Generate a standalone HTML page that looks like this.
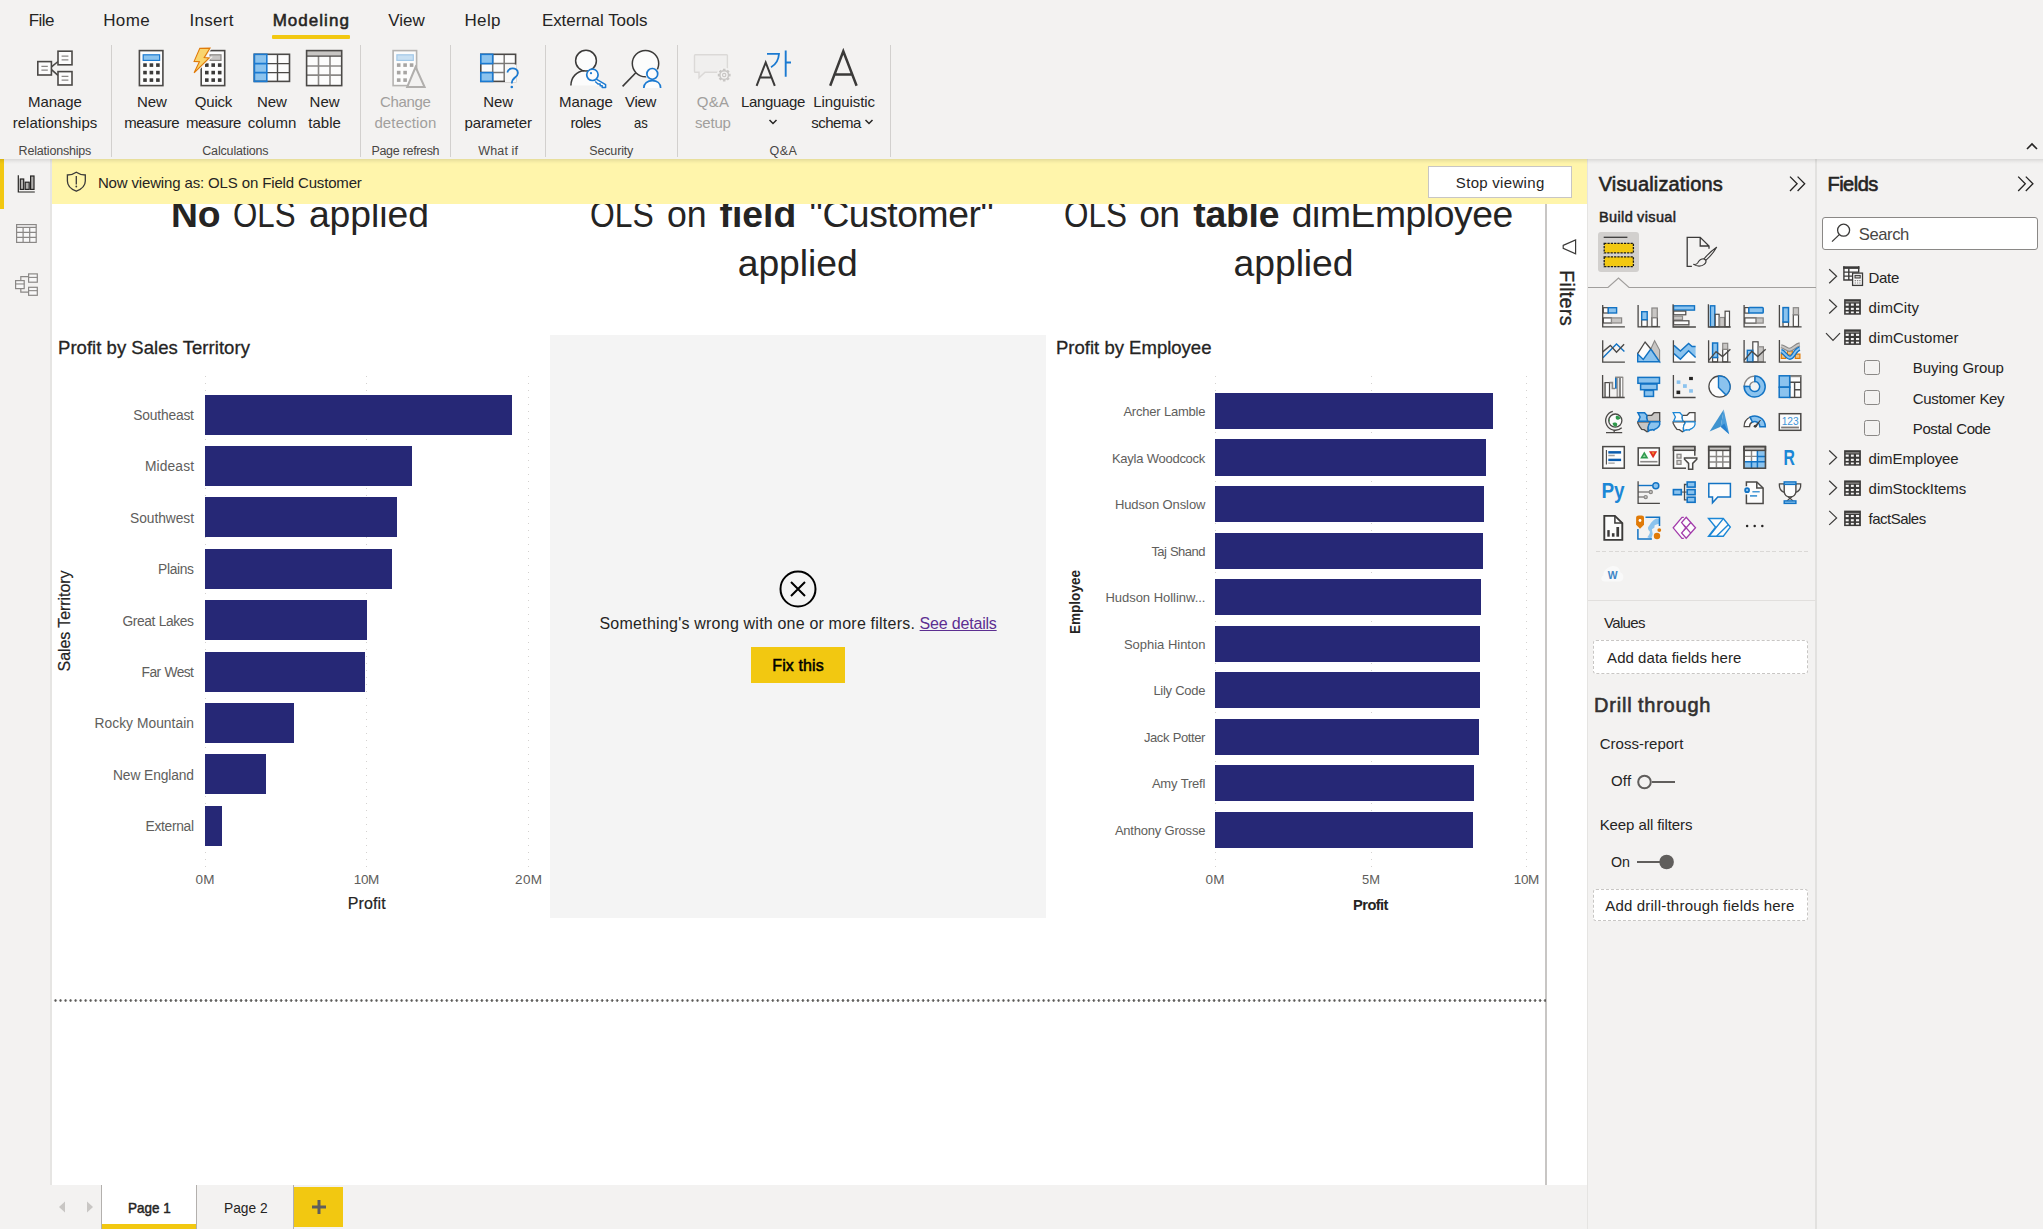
<!DOCTYPE html>
<html><head><meta charset="utf-8"><title>Power BI Desktop</title>
<style>
html,body{margin:0;padding:0;}
body{width:2043px;height:1229px;position:relative;overflow:hidden;background:#f3f2f1;font-family:"Liberation Sans",sans-serif;}
.t{position:absolute;white-space:nowrap;display:block;}
.r{position:absolute;display:block;}
</style></head><body>
<div class="r" style="left:0px;top:0px;width:2043px;height:159px;background:#f3f2f1;"></div>
<div class="r" style="left:52px;top:204px;width:1535px;height:981px;background:#ffffff;"></div>
<div class="r" style="left:0px;top:159px;width:52px;height:1070px;background:#f3f2f1;"></div>
<div class="r" style="left:50px;top:159px;width:2px;height:1026px;background:#e6e5e3;"></div>
<div class="r" style="left:0px;top:159px;width:4px;height:50px;background:#f2c811;"></div>
<div class="r" style="left:52px;top:1185px;width:1535px;height:44px;background:#f3f2f1;"></div>
<div class="r" style="left:1587px;top:159px;width:456px;height:1070px;background:#f3f2f1;"></div>
<div class="r" style="left:1587px;top:159px;width:1px;height:1070px;background:#e5e4e2;"></div>
<div class="r" style="left:1815px;top:159px;width:2px;height:1070px;background:#e2e1df;"></div>
<div class="r" style="left:1545px;top:204px;width:2px;height:981px;background:#c8c6c4;"></div>
<div class="r" style="left:52px;top:159px;width:1535px;height:45px;background:#fff5ab;"></div>
<span class="t" style="left:28.80px;top:12px;font-size:17px;line-height:17px;color:#252423;letter-spacing:-0.590px;">File</span>
<span class="t" style="left:103.20px;top:12px;font-size:17px;line-height:17px;color:#252423;letter-spacing:0.403px;">Home</span>
<span class="t" style="left:189.50px;top:12px;font-size:17px;line-height:17px;color:#252423;letter-spacing:0.280px;">Insert</span>
<span class="t" style="left:272.70px;top:12px;font-size:17px;line-height:17px;color:#252423;-webkit-text-stroke:0.55px #252423;letter-spacing:1.026px;">Modeling</span>
<span class="t" style="left:388.20px;top:12px;font-size:17px;line-height:17px;color:#252423;letter-spacing:0.017px;">View</span>
<span class="t" style="left:464.50px;top:12px;font-size:17px;line-height:17px;color:#252423;letter-spacing:0.322px;">Help</span>
<span class="t" style="left:541.90px;top:12px;font-size:17px;line-height:17px;color:#252423;letter-spacing:-0.067px;word-spacing:0.067px;">External Tools</span>
<div class="r" style="left:272px;top:35px;width:78px;height:4px;background:#f2c811;border-radius:1px;"></div>
<div class="r" style="left:110.5px;top:45px;width:1px;height:112px;background:#d2d0ce;"></div>
<div class="r" style="left:360px;top:45px;width:1px;height:112px;background:#d2d0ce;"></div>
<div class="r" style="left:450px;top:45px;width:1px;height:112px;background:#d2d0ce;"></div>
<div class="r" style="left:545px;top:45px;width:1px;height:112px;background:#d2d0ce;"></div>
<div class="r" style="left:676.5px;top:45px;width:1px;height:112px;background:#d2d0ce;"></div>
<div class="r" style="left:889.5px;top:45px;width:1px;height:112px;background:#d2d0ce;"></div>
<span class="t" style="left:28.10px;top:94px;font-size:15px;line-height:15px;color:#252423;letter-spacing:-0.085px;">Manage</span>
<span class="t" style="left:12.70px;top:115px;font-size:15px;line-height:15px;color:#252423;letter-spacing:0.031px;">relationships</span>
<span class="t" style="left:137.00px;top:94px;font-size:15px;line-height:15px;color:#252423;letter-spacing:-0.037px;">New</span>
<span class="t" style="left:124.30px;top:115px;font-size:15px;line-height:15px;color:#252423;letter-spacing:-0.492px;">measure</span>
<span class="t" style="left:194.80px;top:94px;font-size:15px;line-height:15px;color:#252423;letter-spacing:-0.200px;">Quick</span>
<span class="t" style="left:185.90px;top:115px;font-size:15px;line-height:15px;color:#252423;letter-spacing:-0.492px;">measure</span>
<span class="t" style="left:257.00px;top:94px;font-size:15px;line-height:15px;color:#252423;letter-spacing:-0.037px;">New</span>
<span class="t" style="left:247.70px;top:115px;font-size:15px;line-height:15px;color:#252423;letter-spacing:0.045px;">column</span>
<span class="t" style="left:309.60px;top:94px;font-size:15px;line-height:15px;color:#252423;letter-spacing:-0.037px;">New</span>
<span class="t" style="left:308.25px;top:115px;font-size:15px;line-height:15px;color:#252423;letter-spacing:0.038px;">table</span>
<span class="t" style="left:379.95px;top:94px;font-size:15px;line-height:15px;color:#a19f9d;letter-spacing:-0.335px;">Change</span>
<span class="t" style="left:374.40px;top:115px;font-size:15px;line-height:15px;color:#a19f9d;letter-spacing:0.138px;">detection</span>
<span class="t" style="left:483.20px;top:94px;font-size:15px;line-height:15px;color:#252423;letter-spacing:-0.037px;">New</span>
<span class="t" style="left:464.45px;top:115px;font-size:15px;line-height:15px;color:#252423;letter-spacing:-0.113px;">parameter</span>
<span class="t" style="left:559.00px;top:94px;font-size:15px;line-height:15px;color:#252423;letter-spacing:-0.085px;">Manage</span>
<span class="t" style="left:570.55px;top:115px;font-size:15px;line-height:15px;color:#252423;letter-spacing:-0.462px;">roles</span>
<span class="t" style="left:625.05px;top:94px;font-size:15px;line-height:15px;color:#252423;letter-spacing:-0.317px;">View</span>
<span class="t" style="left:633.80px;top:115px;font-size:15px;line-height:15px;color:#252423;transform:scaleX(0.8720);transform-origin:0 0;">as</span>
<span class="t" style="left:696.75px;top:94px;font-size:15px;line-height:15px;color:#a19f9d;letter-spacing:0.287px;">Q&amp;A</span>
<span class="t" style="left:694.90px;top:115px;font-size:15px;line-height:15px;color:#a19f9d;letter-spacing:-0.169px;">setup</span>
<span class="t" style="left:741.10px;top:94px;font-size:15px;line-height:15px;color:#252423;letter-spacing:-0.364px;">Language</span>
<span class="t" style="left:813.25px;top:94px;font-size:15px;line-height:15px;color:#252423;letter-spacing:-0.094px;">Linguistic</span>
<span class="t" style="left:811.30px;top:115px;font-size:15px;line-height:15px;color:#252423;letter-spacing:-0.515px;">schema</span>
<svg class="r" style="left:768px;top:118px;" width="10" height="8" viewBox="0 0 10 8"><path d="M1.5 2 L5 5.5 L8.5 2" fill="none" stroke="#252423" stroke-width="1.5"/></svg>
<svg class="r" style="left:863.5px;top:118px;" width="10" height="8" viewBox="0 0 10 8"><path d="M1.5 2 L5 5.5 L8.5 2" fill="none" stroke="#252423" stroke-width="1.5"/></svg>
<span class="t" style="left:18.60px;top:145px;font-size:12.5px;line-height:12.5px;color:#484644;letter-spacing:-0.189px;">Relationships</span>
<span class="t" style="left:202.25px;top:145px;font-size:12.5px;line-height:12.5px;color:#484644;letter-spacing:-0.160px;">Calculations</span>
<span class="t" style="left:371.50px;top:145px;font-size:12.5px;line-height:12.5px;color:#484644;letter-spacing:-0.356px;word-spacing:0.356px;">Page refresh</span>
<span class="t" style="left:478.20px;top:145px;font-size:12.5px;line-height:12.5px;color:#484644;letter-spacing:0.172px;word-spacing:-0.172px;">What if</span>
<span class="t" style="left:589.30px;top:145px;font-size:12.5px;line-height:12.5px;color:#484644;letter-spacing:-0.161px;">Security</span>
<span class="t" style="left:769.60px;top:145px;font-size:12.5px;line-height:12.5px;color:#484644;letter-spacing:0.481px;">Q&amp;A</span>
<svg class="r" style="left:2025px;top:141px;" width="14" height="10" viewBox="0 0 14 10"><path d="M2 8 L7 3 L12 8" fill="none" stroke="#252423" stroke-width="1.6"/></svg>
<span class="t" style="left:97.90px;top:175px;font-size:15px;line-height:15px;color:#252423;letter-spacing:-0.178px;word-spacing:0.178px;">Now viewing as: OLS on Field Customer</span>
<div class="r" style="left:1428px;top:166px;width:144px;height:32px;background:#ffffff;border:1px solid #c8c6c4;box-sizing:border-box;"></div>
<span class="t" style="left:1455.80px;top:175px;font-size:15px;line-height:15px;color:#252423;letter-spacing:0.345px;word-spacing:-0.345px;">Stop viewing</span>
<div class="r" style="left:52px;top:204px;width:1493px;height:140px;overflow:hidden;">
<span class="t" style="left:119.10px;top:-8px;font-size:37.3px;line-height:37.3px;color:#252423;font-weight:bold;letter-spacing:-0.295px;">No</span>
<span class="t" style="left:181.00px;top:-8px;font-size:37.3px;line-height:37.3px;color:#252423;transform:scaleX(0.8378);transform-origin:0 0;">OLS</span>
<span class="t" style="left:256.90px;top:-8px;font-size:37.3px;line-height:37.3px;color:#252423;letter-spacing:-0.049px;">applied</span>
<span class="t" style="left:537.90px;top:-8px;font-size:37.3px;line-height:37.3px;color:#252423;transform:scaleX(0.8525);transform-origin:0 0;">OLS</span>
<span class="t" style="left:615.00px;top:-8px;font-size:37.3px;line-height:37.3px;color:#252423;transform:scaleX(0.9565);transform-origin:0 0;">on</span>
<span class="t" style="left:667.60px;top:-8px;font-size:37.3px;line-height:37.3px;color:#252423;font-weight:bold;letter-spacing:-0.013px;">field</span>
<span class="t" style="left:757.60px;top:-8px;font-size:37.3px;line-height:37.3px;color:#252423;letter-spacing:-0.453px;">"Customer"</span>
<span class="t" style="left:685.70px;top:41px;font-size:37.3px;line-height:37.3px;color:#252423;letter-spacing:-0.032px;">applied</span>
<span class="t" style="left:1011.50px;top:-8px;font-size:37.3px;line-height:37.3px;color:#252423;transform:scaleX(0.8432);transform-origin:0 0;">OLS</span>
<span class="t" style="left:1087.30px;top:-8px;font-size:37.3px;line-height:37.3px;color:#252423;letter-spacing:-0.803px;">on</span>
<span class="t" style="left:1141.20px;top:-8px;font-size:37.3px;line-height:37.3px;color:#252423;font-weight:bold;letter-spacing:-0.174px;">table</span>
<span class="t" style="left:1239.80px;top:-8px;font-size:37.3px;line-height:37.3px;color:#252423;letter-spacing:-0.454px;">dimEmployee</span>
<span class="t" style="left:1181.60px;top:41px;font-size:37.3px;line-height:37.3px;color:#252423;letter-spacing:-0.065px;">applied</span>
</div>
<span class="t" style="left:58.00px;top:339px;font-size:18.5px;line-height:18.5px;color:#252423;-webkit-text-stroke:0.3px #252423;letter-spacing:0.047px;word-spacing:-0.047px;">Profit by Sales Territory</span>
<div class="r" style="left:204.5px;top:376px;width:1px;height:491px;background:repeating-linear-gradient(to bottom,#d4d2d0 0,#d4d2d0 1px,transparent 1px,transparent 7px);"></div>
<div class="r" style="left:366.0px;top:376px;width:1px;height:491px;background:repeating-linear-gradient(to bottom,#d4d2d0 0,#d4d2d0 1px,transparent 1px,transparent 7px);"></div>
<div class="r" style="left:528.0px;top:376px;width:1px;height:491px;background:repeating-linear-gradient(to bottom,#d4d2d0 0,#d4d2d0 1px,transparent 1px,transparent 7px);"></div>
<div class="r" style="left:205px;top:394.6px;width:306.8px;height:40.1px;background:#262876;"></div>
<span class="t" style="left:133.30px;top:409px;font-size:13.8px;line-height:13.8px;color:#605e5c;letter-spacing:-0.184px;">Southeast</span>
<div class="r" style="left:205px;top:446.0px;width:207.2px;height:40.1px;background:#262876;"></div>
<span class="t" style="left:145.00px;top:460px;font-size:13.8px;line-height:13.8px;color:#605e5c;letter-spacing:0.117px;">Mideast</span>
<div class="r" style="left:205px;top:497.4px;width:192px;height:40.1px;background:#262876;"></div>
<span class="t" style="left:130.00px;top:512px;font-size:13.8px;line-height:13.8px;color:#605e5c;letter-spacing:-0.056px;">Southwest</span>
<div class="r" style="left:205px;top:548.8px;width:187.1px;height:40.1px;background:#262876;"></div>
<span class="t" style="left:158.00px;top:563px;font-size:13.8px;line-height:13.8px;color:#605e5c;letter-spacing:-0.321px;">Plains</span>
<div class="r" style="left:205px;top:600.2px;width:162px;height:40.1px;background:#262876;"></div>
<span class="t" style="left:122.50px;top:615px;font-size:13.8px;line-height:13.8px;color:#605e5c;letter-spacing:-0.405px;word-spacing:0.405px;">Great Lakes</span>
<div class="r" style="left:205px;top:651.6px;width:160px;height:40.1px;background:#262876;"></div>
<span class="t" style="left:141.50px;top:666px;font-size:13.8px;line-height:13.8px;color:#605e5c;letter-spacing:-0.542px;word-spacing:0.542px;">Far West</span>
<div class="r" style="left:205px;top:703.0px;width:88.5px;height:40.1px;background:#262876;"></div>
<span class="t" style="left:94.50px;top:717px;font-size:13.8px;line-height:13.8px;color:#605e5c;letter-spacing:0.046px;word-spacing:-0.046px;">Rocky Mountain</span>
<div class="r" style="left:205px;top:754.4px;width:61.1px;height:40.1px;background:#262876;"></div>
<span class="t" style="left:113.00px;top:769px;font-size:13.8px;line-height:13.8px;color:#605e5c;letter-spacing:-0.123px;word-spacing:0.123px;">New England</span>
<div class="r" style="left:205px;top:805.8px;width:17.3px;height:40.1px;background:#262876;"></div>
<span class="t" style="left:145.50px;top:820px;font-size:13.8px;line-height:13.8px;color:#605e5c;letter-spacing:-0.307px;">External</span>
<span class="t" style="left:195.50px;top:873px;font-size:13.5px;line-height:13.5px;color:#605e5c;letter-spacing:0.235px;">0M</span>
<span class="t" style="left:353.75px;top:873px;font-size:13.5px;line-height:13.5px;color:#605e5c;letter-spacing:-0.379px;">10M</span>
<span class="t" style="left:515.00px;top:873px;font-size:13.5px;line-height:13.5px;color:#605e5c;letter-spacing:0.371px;">20M</span>
<span class="t" style="left:347.70px;top:896px;font-size:16px;line-height:16px;color:#252423;-webkit-text-stroke:0.2px #252423;letter-spacing:0.128px;">Profit</span>
<div class="r" style="left:65px;top:620.6px;width:0;height:0;"><div style="position:absolute;transform:translate(-50%,-50%) rotate(-90deg);white-space:nowrap;font-size:16px;line-height:16px;color:#252423;-webkit-text-stroke:0.2px #252423;letter-spacing:-0.08px;">Sales Territory</div></div>
<div class="r" style="left:550px;top:334.5px;width:496px;height:583.5px;background:#f4f4f4;"></div>
<svg class="r" style="left:778px;top:569px;" width="40" height="40" viewBox="0 0 40 40"><circle cx="20" cy="20" r="17.5" fill="none" stroke="#000" stroke-width="2"/><path d="M13 13 L27 27 M27 13 L13 27" stroke="#000" stroke-width="2" fill="none"/></svg>
<span class="t" style="left:599.40px;top:616px;font-size:16px;line-height:16px;color:#252423;letter-spacing:0.258px;word-spacing:-0.258px;">Something's wrong with one or more filters.</span>
<span class="t" style="left:919.60px;top:616px;font-size:16px;line-height:16px;color:#5c2e91;letter-spacing:-0.211px;word-spacing:0.211px;text-decoration:underline;">See details</span>
<div class="r" style="left:751px;top:647.3px;width:94px;height:35.3px;background:#f2c811;"></div>
<span class="t" style="left:772.25px;top:658px;font-size:16px;line-height:16px;color:#000;-webkit-text-stroke:0.5px #000;letter-spacing:0.143px;word-spacing:-0.143px;">Fix this</span>
<span class="t" style="left:1056.00px;top:339px;font-size:18.5px;line-height:18.5px;color:#252423;-webkit-text-stroke:0.3px #252423;letter-spacing:0.013px;word-spacing:-0.013px;">Profit by Employee</span>
<div class="r" style="left:1214.5px;top:376px;width:1px;height:491px;background:repeating-linear-gradient(to bottom,#d4d2d0 0,#d4d2d0 1px,transparent 1px,transparent 7px);"></div>
<div class="r" style="left:1370.5px;top:376px;width:1px;height:491px;background:repeating-linear-gradient(to bottom,#d4d2d0 0,#d4d2d0 1px,transparent 1px,transparent 7px);"></div>
<div class="r" style="left:1526.0px;top:376px;width:1px;height:491px;background:repeating-linear-gradient(to bottom,#d4d2d0 0,#d4d2d0 1px,transparent 1px,transparent 7px);"></div>
<div class="r" style="left:1215px;top:392.9px;width:278px;height:36.2px;background:#262876;"></div>
<span class="t" style="left:1123.40px;top:405px;font-size:13px;line-height:13px;color:#605e5c;letter-spacing:-0.233px;word-spacing:0.233px;">Archer Lamble</span>
<div class="r" style="left:1215px;top:439.4px;width:270.9px;height:36.2px;background:#262876;"></div>
<span class="t" style="left:1111.90px;top:452px;font-size:13px;line-height:13px;color:#605e5c;letter-spacing:-0.263px;word-spacing:0.263px;">Kayla Woodcock</span>
<div class="r" style="left:1215px;top:485.9px;width:269.4px;height:36.2px;background:#262876;"></div>
<span class="t" style="left:1114.90px;top:498px;font-size:13px;line-height:13px;color:#605e5c;letter-spacing:-0.116px;word-spacing:0.116px;">Hudson Onslow</span>
<div class="r" style="left:1215px;top:532.5px;width:267.7px;height:36.2px;background:#262876;"></div>
<span class="t" style="left:1151.40px;top:545px;font-size:13px;line-height:13px;color:#605e5c;letter-spacing:-0.550px;word-spacing:0.550px;">Taj Shand</span>
<div class="r" style="left:1215px;top:579.0px;width:265.7px;height:36.2px;background:#262876;"></div>
<span class="t" style="left:1105.40px;top:591px;font-size:13px;line-height:13px;color:#605e5c;letter-spacing:-0.028px;word-spacing:0.028px;">Hudson Hollinw...</span>
<div class="r" style="left:1215px;top:625.5px;width:265.3px;height:36.2px;background:#262876;"></div>
<span class="t" style="left:1123.90px;top:638px;font-size:13px;line-height:13px;color:#605e5c;letter-spacing:-0.013px;word-spacing:0.013px;">Sophia Hinton</span>
<div class="r" style="left:1215px;top:672.0px;width:265px;height:36.2px;background:#262876;"></div>
<span class="t" style="left:1153.40px;top:684px;font-size:13px;line-height:13px;color:#605e5c;letter-spacing:-0.316px;word-spacing:0.316px;">Lily Code</span>
<div class="r" style="left:1215px;top:718.5px;width:264px;height:36.2px;background:#262876;"></div>
<span class="t" style="left:1143.90px;top:731px;font-size:13px;line-height:13px;color:#605e5c;letter-spacing:-0.389px;word-spacing:0.389px;">Jack Potter</span>
<div class="r" style="left:1215px;top:765.1px;width:259.1px;height:36.2px;background:#262876;"></div>
<span class="t" style="left:1151.90px;top:777px;font-size:13px;line-height:13px;color:#605e5c;letter-spacing:-0.204px;word-spacing:0.204px;">Amy Trefl</span>
<div class="r" style="left:1215px;top:811.6px;width:257.7px;height:36.2px;background:#262876;"></div>
<span class="t" style="left:1114.90px;top:824px;font-size:13px;line-height:13px;color:#605e5c;letter-spacing:-0.226px;word-spacing:0.226px;">Anthony Grosse</span>
<span class="t" style="left:1205.50px;top:873px;font-size:13.5px;line-height:13.5px;color:#605e5c;letter-spacing:0.235px;">0M</span>
<span class="t" style="left:1362.00px;top:873px;font-size:13.5px;line-height:13.5px;color:#605e5c;transform:scaleX(0.9592);transform-origin:0 0;">5M</span>
<span class="t" style="left:1513.75px;top:873px;font-size:13.5px;line-height:13.5px;color:#605e5c;letter-spacing:-0.379px;">10M</span>
<span class="t" style="left:1353.10px;top:898px;font-size:14.67px;line-height:14.67px;color:#252423;font-weight:bold;letter-spacing:-0.578px;">Profit</span>
<div class="r" style="left:1074.8px;top:601.8px;width:0;height:0;"><div style="position:absolute;transform:translate(-50%,-50%) rotate(-90deg) scaleX(0.925);white-space:nowrap;font-size:14.67px;line-height:15px;color:#252423;font-weight:bold;">Employee</div></div>
<div class="r" style="left:52.9px;top:999px;width:1493px;height:3px;background:radial-gradient(circle at 2.51px 1.5px,#5a5957 0.95px,rgba(90,89,87,0) 1.55px);background-size:5.02px 3px;"></div>
<div class="r" style="left:101px;top:1185px;width:96px;height:44px;background:#ffffff;"></div>
<div class="r" style="left:101px;top:1224px;width:96px;height:5px;background:#f2c811;"></div>
<div class="r" style="left:101px;top:1185px;width:1px;height:44px;background:#b3b0ad;"></div>
<div class="r" style="left:196px;top:1185px;width:1px;height:44px;background:#b3b0ad;"></div>
<div class="r" style="left:293px;top:1185px;width:1px;height:44px;background:#b3b0ad;"></div>
<span class="t" style="left:128.10px;top:1200px;font-size:15px;line-height:15px;color:#252423;-webkit-text-stroke:0.5px #252423;transform:scaleX(0.8980);transform-origin:0 0;">Page 1</span>
<span class="t" style="left:223.50px;top:1200px;font-size:15px;line-height:15px;color:#252423;transform:scaleX(0.9169);transform-origin:0 0;">Page 2</span>
<div class="r" style="left:294px;top:1187px;width:49px;height:40px;background:#f2c811;"></div>
<svg class="r" style="left:309px;top:1197px;" width="20" height="20" viewBox="0 0 20 20"><path d="M10 3 V17 M3 10 H17" stroke="#605e5c" stroke-width="3" fill="none"/></svg>
<svg class="r" style="left:58px;top:1200px;" width="8" height="14" viewBox="0 0 8 14"><path d="M7 1.5 L1 7 L7 12.5 Z" fill="#c8c6c4"/></svg>
<svg class="r" style="left:86px;top:1200px;" width="8" height="14" viewBox="0 0 8 14"><path d="M1 1.5 L7 7 L1 12.5 Z" fill="#c8c6c4"/></svg>
<div class="r" style="left:1566.6px;top:297.5px;width:0;height:0;"><div style="position:absolute;transform:translate(-50%,-50%) rotate(90deg);white-space:nowrap;font-size:20px;line-height:20px;color:#252423;-webkit-text-stroke:0.35px #252423;letter-spacing:0.2px;">Filters</div></div>
<span class="t" style="left:1598.70px;top:174px;font-size:20px;line-height:20px;color:#252423;-webkit-text-stroke:0.6px #252423;letter-spacing:0.162px;">Visualizations</span>
<span class="t" style="left:1599.00px;top:210px;font-size:14.5px;line-height:14.5px;color:#252423;-webkit-text-stroke:0.5px #252423;letter-spacing:0.363px;word-spacing:-0.363px;">Build visual</span>
<div class="r" style="left:1598px;top:232px;width:41px;height:40px;background:#d2d0ce;border-radius:3px;"></div>
<svg class="r" style="left:1588px;top:276px;" width="228" height="14" viewBox="0 0 228 14"><path d="M0 11.5 H20 L30.5 2 L41 11.5 H228" fill="none" stroke="#a19f9d" stroke-width="1.2"/></svg>
<div class="r" style="left:1595.7px;top:551px;width:212.5px;height:1px;background:repeating-linear-gradient(to right,#dad8d6 0,#dad8d6 4px,transparent 4px,transparent 6.3px);"></div>
<div class="r" style="left:1588px;top:600px;width:228px;height:1px;background:#e1dfdd;"></div>
<span class="t" style="left:1603.90px;top:615px;font-size:15px;line-height:15px;color:#252423;letter-spacing:-0.615px;">Values</span>
<div class="r" style="left:1593px;top:639.5px;width:215px;height:34.5px;background:#fff;border:1px dashed #c8c6c4;border-radius:3px;box-sizing:border-box;"></div>
<span class="t" style="left:1607.10px;top:650px;font-size:15px;line-height:15px;color:#252423;letter-spacing:0.048px;word-spacing:-0.048px;">Add data fields here</span>
<span class="t" style="left:1594.10px;top:695px;font-size:20px;line-height:20px;color:#323130;-webkit-text-stroke:0.6px #323130;letter-spacing:0.773px;word-spacing:-0.773px;">Drill through</span>
<span class="t" style="left:1599.70px;top:736px;font-size:15px;line-height:15px;color:#252423;letter-spacing:0.025px;">Cross-report</span>
<span class="t" style="left:1611.00px;top:773px;font-size:15px;line-height:15px;color:#252423;letter-spacing:0.200px;">Off</span>
<svg class="r" style="left:1634px;top:772px;" width="44" height="20" viewBox="0 0 44 20"><path d="M18 10 H41" stroke="#605e5c" stroke-width="2"/><circle cx="10.5" cy="10" r="6.3" fill="#f3f2f1" stroke="#605e5c" stroke-width="2"/></svg>
<span class="t" style="left:1599.70px;top:817px;font-size:15px;line-height:15px;color:#252423;letter-spacing:-0.108px;word-spacing:0.108px;">Keep all filters</span>
<span class="t" style="left:1611.00px;top:854px;font-size:15px;line-height:15px;color:#252423;transform:scaleX(0.9488);transform-origin:0 0;">On</span>
<svg class="r" style="left:1634px;top:852px;" width="44" height="20" viewBox="0 0 44 20"><path d="M3 10 H28" stroke="#605e5c" stroke-width="2"/><circle cx="32.6" cy="10" r="7.3" fill="#605e5c"/></svg>
<div class="r" style="left:1593px;top:888.5px;width:215px;height:32.5px;background:#fff;border:1px dashed #c8c6c4;border-radius:3px;box-sizing:border-box;"></div>
<span class="t" style="left:1605.20px;top:898px;font-size:15px;line-height:15px;color:#252423;letter-spacing:0.230px;word-spacing:-0.230px;">Add drill-through fields here</span>
<span class="t" style="left:1827.40px;top:174px;font-size:20px;line-height:20px;color:#252423;-webkit-text-stroke:0.6px #252423;letter-spacing:-0.480px;">Fields</span>
<div class="r" style="left:1822px;top:216.5px;width:216px;height:33px;background:#fff;border:1px solid #8a8886;border-radius:3px;box-sizing:border-box;"></div>
<span class="t" style="left:1858.80px;top:227px;font-size:16.6px;line-height:16.6px;color:#484644;letter-spacing:-0.404px;">Search</span>
<span class="t" style="left:1868.60px;top:270px;font-size:15px;line-height:15px;color:#252423;letter-spacing:-0.350px;">Date</span>
<span class="t" style="left:1868.60px;top:300px;font-size:15px;line-height:15px;color:#252423;letter-spacing:0.062px;">dimCity</span>
<span class="t" style="left:1868.60px;top:330px;font-size:15px;line-height:15px;color:#252423;letter-spacing:0.062px;">dimCustomer</span>
<span class="t" style="left:1912.80px;top:360px;font-size:15px;line-height:15px;color:#252423;letter-spacing:-0.062px;word-spacing:0.062px;">Buying Group</span>
<div class="r" style="left:1864.3px;top:359.8px;width:15.4px;height:15.4px;background:transparent;border:1px solid #8a8886;border-radius:2.5px;box-sizing:border-box;"></div>
<span class="t" style="left:1912.80px;top:391px;font-size:15px;line-height:15px;color:#252423;letter-spacing:-0.323px;word-spacing:0.323px;">Customer Key</span>
<div class="r" style="left:1864.3px;top:390.0px;width:15.4px;height:15.4px;background:transparent;border:1px solid #8a8886;border-radius:2.5px;box-sizing:border-box;"></div>
<span class="t" style="left:1912.80px;top:421px;font-size:15px;line-height:15px;color:#252423;letter-spacing:-0.406px;word-spacing:0.406px;">Postal Code</span>
<div class="r" style="left:1864.3px;top:420.2px;width:15.4px;height:15.4px;background:transparent;border:1px solid #8a8886;border-radius:2.5px;box-sizing:border-box;"></div>
<span class="t" style="left:1868.60px;top:451px;font-size:15px;line-height:15px;color:#252423;letter-spacing:-0.080px;">dimEmployee</span>
<span class="t" style="left:1868.60px;top:481px;font-size:15px;line-height:15px;color:#252423;letter-spacing:-0.060px;">dimStockItems</span>
<span class="t" style="left:1868.60px;top:511px;font-size:15px;line-height:15px;color:#252423;letter-spacing:-0.516px;">factSales</span>
<div class="r" style="left:0;top:159px;width:2043px;height:5px;background:linear-gradient(rgba(0,0,0,0.10),rgba(0,0,0,0.03) 60%,rgba(0,0,0,0));"></div>
<svg class="r" style="left:0;top:0;" width="2043" height="1229" viewBox="0 0 2043 1229"><path d="M51.5 66.8 L58 61.5 M51.5 69.6 L58 75.4" stroke="#4b4947" stroke-width="1.6" fill="none"/><rect x="37.8" y="61.6" width="13.6" height="13.4" fill="#fcfcfc" stroke="#4b4947" stroke-width="1.6"/><path d="M41.4 66.39999999999999 H47.8 M41.4 70.2 H47.8" stroke="#8a8886" stroke-width="1.3"/><rect x="58" y="51.2" width="14" height="13.6" fill="#fcfcfc" stroke="#4b4947" stroke-width="1.6"/><path d="M61.6 56.1 H68.4 M61.6 59.9 H68.4" stroke="#8a8886" stroke-width="1.3"/><rect x="58" y="71.6" width="14" height="13.4" fill="#fcfcfc" stroke="#4b4947" stroke-width="1.6"/><path d="M61.6 76.39999999999999 H68.4 M61.6 80.2 H68.4" stroke="#8a8886" stroke-width="1.3"/><rect x="139.4" y="50.6" width="23.5" height="35" fill="#fcfcfc" stroke="#4b4947" stroke-width="1.6"/><rect x="143.20000000000002" y="54.800000000000004" width="16.4" height="5.6" fill="#8bc3ee" stroke="#1b7ad1" stroke-width="1.2"/><rect x="143.20000000000002" y="63.3" width="3.6" height="3.6" fill="#3b3a39"/><rect x="149.6" y="63.3" width="3.6" height="3.6" fill="#3b3a39"/><rect x="156.1" y="63.3" width="3.6" height="3.6" fill="#3b3a39"/><rect x="143.20000000000002" y="70.8" width="3.6" height="3.6" fill="#3b3a39"/><rect x="149.6" y="70.8" width="3.6" height="3.6" fill="#3b3a39"/><rect x="156.1" y="70.8" width="3.6" height="3.6" fill="#3b3a39"/><rect x="143.20000000000002" y="78.3" width="3.6" height="3.6" fill="#3b3a39"/><rect x="149.6" y="78.3" width="3.6" height="3.6" fill="#3b3a39"/><rect x="156.1" y="78.3" width="3.6" height="3.6" fill="#3b3a39"/><rect x="201.2" y="50.6" width="23.5" height="35" fill="#fcfcfc" stroke="#4b4947" stroke-width="1.6"/><rect x="210.0" y="54.800000000000004" width="11.0" height="5.6" fill="#c8c6c4" stroke="#8a8886" stroke-width="1.2"/><rect x="205.0" y="63.3" width="3.6" height="3.6" fill="#3b3a39"/><rect x="211.39999999999998" y="63.3" width="3.6" height="3.6" fill="#3b3a39"/><rect x="217.89999999999998" y="63.3" width="3.6" height="3.6" fill="#3b3a39"/><rect x="205.0" y="70.8" width="3.6" height="3.6" fill="#3b3a39"/><rect x="211.39999999999998" y="70.8" width="3.6" height="3.6" fill="#3b3a39"/><rect x="217.89999999999998" y="70.8" width="3.6" height="3.6" fill="#3b3a39"/><rect x="205.0" y="78.3" width="3.6" height="3.6" fill="#3b3a39"/><rect x="211.39999999999998" y="78.3" width="3.6" height="3.6" fill="#3b3a39"/><rect x="217.89999999999998" y="78.3" width="3.6" height="3.6" fill="#3b3a39"/><path d="M199.8 48.4 L210 48.1 L204.2 57.6 L209.2 58 L194.1 72.8 L199.4 61.7 L194.1 61.4 Z" fill="#f3f2f1" stroke="#f3f2f1" stroke-width="3.2"/><path d="M199.8 48.4 L210 48.1 L204.2 57.6 L209.2 58 L194.1 72.8 L199.4 61.7 L194.1 61.4 Z" fill="#f9d56e" stroke="#e07a08" stroke-width="1.1" stroke-linejoin="miter"/><rect x="393.1" y="50.6" width="23.5" height="35" fill="#fcfcfc" stroke="#b5b3b1" stroke-width="1.6"/><rect x="396.90000000000003" y="54.800000000000004" width="16.4" height="5.6" fill="#c9e0f2" stroke="#a3c9e8" stroke-width="1.2"/><rect x="396.90000000000003" y="63.3" width="3.6" height="3.6" fill="#a7a5a3"/><rect x="403.3" y="63.3" width="3.6" height="3.6" fill="#a7a5a3"/><rect x="409.8" y="63.3" width="3.6" height="3.6" fill="#a7a5a3"/><rect x="396.90000000000003" y="70.8" width="3.6" height="3.6" fill="#a7a5a3"/><rect x="403.3" y="70.8" width="3.6" height="3.6" fill="#a7a5a3"/><rect x="396.90000000000003" y="78.3" width="3.6" height="3.6" fill="#a7a5a3"/><rect x="403.3" y="78.3" width="3.6" height="3.6" fill="#a7a5a3"/><path d="M415.6 67 L407.2 87 H424.6 Z" fill="#f3f2f1" stroke="#b1afad" stroke-width="2" stroke-linejoin="miter"/><rect x="254.3" y="54.3" width="35.2" height="27.1" fill="#fcfcfc"/><rect x="254.3" y="54.3" width="12.5" height="27.1" fill="#8bc3ee"/><path d="M266.8 63.6 H289.5 M266.8 72.6 H289.5 M277.5 54.3 V81.4" stroke="#4b4947" stroke-width="1.4"/><rect x="254.3" y="54.3" width="35.2" height="27.1" fill="none" stroke="#4b4947" stroke-width="1.6"/><path d="M254.3 54.3 V81.4 M266.8 54.3 V81.4 M254.3 63.6 H266.8 M254.3 72.6 H266.8 M253.5 54.3 H267.6 M253.5 81.4 H267.6" stroke="#1b7ad1" stroke-width="1.6"/><rect x="306.6" y="50.6" width="35.1" height="35" fill="#fcfcfc"/><rect x="306.6" y="50.6" width="35.1" height="5.5" fill="#c8c6c4"/><path d="M306.6 66 H341.7 M306.6 75.1 H341.7 M318.5 56.1 V85.6 M330 56.1 V85.6" stroke="#8a8886" stroke-width="1.6"/><path d="M306.6 56.1 H341.7" stroke="#4b4947" stroke-width="1.4"/><rect x="306.6" y="50.6" width="35.1" height="35" fill="none" stroke="#4b4947" stroke-width="1.6"/><rect x="480.8" y="54.3" width="34.8" height="27.1" fill="#fcfcfc"/><path d="M480.8 63.6 H515.6 M480.8 72.6 H515.6 M504.2 54.3 V81.4 M492.7 54.3 V81.4" stroke="#7a7876" stroke-width="1.5"/><rect x="480.8" y="54.3" width="34.8" height="27.1" fill="none" stroke="#4b4947" stroke-width="1.6"/><rect x="480.8" y="54.3" width="11.9" height="9.3" fill="#8bc3ee" stroke="#1b7ad1" stroke-width="1.6"/><rect x="480.8" y="72.6" width="11.9" height="8.8" fill="#8bc3ee" stroke="#1b7ad1" stroke-width="1.6"/><rect x="505" y="64.6" width="11.6" height="17.6" fill="#f7f7f6"/><path d="M507.3 72.5 C508 68.5 513 67.3 516 69.3 C519 71.5 518.3 75 515.5 77 C513.2 78.8 511.8 80 511.8 83.4" fill="none" stroke="#1b7ad1" stroke-width="1.7"/><circle cx="511.8" cy="87" r="1.3" fill="#1b7ad1"/><path d="M570.9 85.6 C570.9 77 577 71 585 70.6 L600 85.6 Z" fill="#fcfcfc"/><circle cx="586" cy="60.7" r="10.4" fill="#fcfcfc" stroke="#3b3a39" stroke-width="1.5"/><path d="M570.9 85.6 C570.9 77 577 71.2 584.3 70.8" fill="none" stroke="#3b3a39" stroke-width="1.5"/><path d="M596.3 79.2 L605.6 84.6 V87.6 H602.2 V85.8 H600.2 V84 H598 L595.2 81.5" fill="#fcfcfc" stroke="#1b7ad1" stroke-width="1.5" stroke-linejoin="round"/><circle cx="592.4" cy="74.8" r="5.7" fill="#fcfcfc" stroke="#1b7ad1" stroke-width="1.7"/><circle cx="591" cy="73.2" r="1.1" fill="#1b7ad1"/><circle cx="645.5" cy="63.6" r="13.2" fill="#fcfcfc" stroke="#3b3a39" stroke-width="1.5"/><path d="M635.8 72.8 L622.6 86.4" stroke="#3b3a39" stroke-width="1.6"/><path d="M643.6 88 C643.6 83.6 647.4 80.6 652.3 80.6 C657.2 80.6 660.8 83.6 660.8 88 Z" fill="#fcfcfc" stroke="#f3f2f1" stroke-width="3"/><circle cx="652.3" cy="73.9" r="6.9" fill="#f3f2f1"/><path d="M643.8 88 C643.8 83.6 647.4 80.7 652.3 80.7 C657.2 80.7 660.6 83.6 660.6 88" fill="#fcfcfc" stroke="#1b7ad1" stroke-width="1.7"/><circle cx="652.3" cy="73.9" r="5.4" fill="#fcfcfc" stroke="#1b7ad1" stroke-width="1.7"/><path d="M695.3 54.8 H726.6 Q727.4 54.8 727.4 55.6 V71.4 Q727.4 72.2 726.6 72.2 H705 L699 77.8 V72.2 H695.3 Q694.5 72.2 694.5 71.4 V55.6 Q694.5 54.8 695.3 54.8 Z" fill="#f0efee" stroke="#dbd9d7" stroke-width="1.4"/><circle cx="724.2" cy="75.1" r="7.6" fill="#f3f2f1"/><path d="M728.60 75.10 L730.60 75.10" stroke="#c8c6c4" stroke-width="2.6"/><path d="M727.31 78.21 L728.73 79.63" stroke="#c8c6c4" stroke-width="2.6"/><path d="M724.20 79.50 L724.20 81.50" stroke="#c8c6c4" stroke-width="2.6"/><path d="M721.09 78.21 L719.67 79.63" stroke="#c8c6c4" stroke-width="2.6"/><path d="M719.80 75.10 L717.80 75.10" stroke="#c8c6c4" stroke-width="2.6"/><path d="M721.09 71.99 L719.67 70.57" stroke="#c8c6c4" stroke-width="2.6"/><path d="M724.20 70.70 L724.20 68.70" stroke="#c8c6c4" stroke-width="2.6"/><path d="M727.31 71.99 L728.73 70.57" stroke="#c8c6c4" stroke-width="2.6"/><circle cx="724.2" cy="75.1" r="4.3" fill="#f3f2f1" stroke="#c8c6c4" stroke-width="1.4"/><circle cx="724.2" cy="75.1" r="1.7" fill="none" stroke="#c8c6c4" stroke-width="1.1"/><path d="M756.6 85.8 L765.7 62.4 L774.8 85.8 M760 77.4 H771.6" fill="none" stroke="#3b3a39" stroke-width="2"/><path d="M767 53.8 H779 C778.6 60 776 64.6 771 67.2" fill="none" stroke="#1b7ad1" stroke-width="1.8"/><path d="M785.7 50.4 V76.8 M785.7 62.5 H791" fill="none" stroke="#1b7ad1" stroke-width="1.9"/><path d="M830.2 85.8 L843.3 51.2 L856.6 85.8 M834.6 74.5 H852.2" fill="none" stroke="#3b3a39" stroke-width="2.5"/><path d="M18.3 175.3 V192 H34.8" fill="none" stroke="#252423" stroke-width="1.2"/><rect x="20.3" y="179" width="3.3999999999999986" height="10.400000000000006" fill="#b1afad" stroke="#252423" stroke-width="1.2"/><rect x="25.2" y="182.2" width="4.0" height="7.200000000000017" fill="#b1afad" stroke="#252423" stroke-width="1.2"/><rect x="30.6" y="176" width="3.3999999999999986" height="13.400000000000006" fill="#b1afad" stroke="#252423" stroke-width="1.2"/><rect x="16.6" y="224.6" width="19.6" height="17.8" fill="#f8f8f8" stroke="#8a8886" stroke-width="1.2"/><path d="M16.6 227.4 H36.2 M16.6 232.4 H36.2 M16.6 237.4 H36.2 M23.1 227.4 V242.4 M29.7 227.4 V242.4" stroke="#8a8886" stroke-width="1.2" fill="none"/><path d="M20.8 280.6 V276.6 H28.6 M20.8 288.6 V292.2 H28.6" fill="none" stroke="#8a8886" stroke-width="1.2"/><rect x="15.6" y="280.6" width="8.6" height="8" fill="#f8f8f8" stroke="#8a8886" stroke-width="1.2"/><path d="M15.6 283.96000000000004 H24.2" stroke="#8a8886" stroke-width="1.1"/><rect x="28.6" y="273.9" width="8.7" height="8.3" fill="#f8f8f8" stroke="#8a8886" stroke-width="1.2"/><path d="M28.6 277.38599999999997 H37.3" stroke="#8a8886" stroke-width="1.1"/><rect x="28.6" y="287.3" width="8.7" height="8" fill="#f8f8f8" stroke="#8a8886" stroke-width="1.2"/><path d="M28.6 290.66 H37.3" stroke="#8a8886" stroke-width="1.1"/><path d="M76.3 172.2 C79.5 174.4 82.3 175 85.3 175 V181 C85.3 185.8 81.5 189.2 76.3 191.2 C71.1 189.2 67.4 185.8 67.4 181 V175 C70.4 175 73.2 174.4 76.3 172.2 Z" fill="none" stroke="#3b3a39" stroke-width="1.3"/><path d="M76.3 176 V184.4" stroke="#3b3a39" stroke-width="1.3"/><circle cx="76.3" cy="186.5" r="0.9" fill="#3b3a39"/><path d="M1563.2 245.4 L1575.6 239.9 V253.9 L1563.2 248.4 Z" fill="none" stroke="#3b3a39" stroke-width="1.2" stroke-linejoin="miter"/><path d="M1790 176.6 L1797.1 183.79999999999998 L1790 191.0 M1797.6 176.6 L1804.7 183.79999999999998 L1797.6 191.0" fill="none" stroke="#252423" stroke-width="1.3"/><path d="M2018.2 176.6 L2025.3 183.79999999999998 L2018.2 191.0 M2025.8 176.6 L2032.9 183.79999999999998 L2025.8 191.0" fill="none" stroke="#252423" stroke-width="1.3"/><path d="M1603.7 237.3 H1627.4" stroke="#3b3a39" stroke-width="1.3"/><rect x="1604.2" y="243.3" width="29.2" height="9.599999999999994" fill="#f2c811" stroke="#1b1a19" stroke-width="1.3" stroke-dasharray="2.2 1.1"/><rect x="1604.2" y="256.8" width="29.2" height="9.800000000000011" fill="#f2c811" stroke="#1b1a19" stroke-width="1.3" stroke-dasharray="2.2 1.1"/><path d="M1691.9 266.4 H1687.2 V237.3 H1700.2 L1709 246 V248.8 M1700.2 237.3 V246 H1709" fill="none" stroke="#3b3a39" stroke-width="1.3"/><path d="M1716.6 247.3 C1714 252 1710 256.6 1705.8 260.4 L1704 258.8 C1707.6 254.6 1712 250.4 1716.6 247.3 Z" fill="#f3f2f1" stroke="#3b3a39" stroke-width="1.1" stroke-linejoin="round"/><path d="M1704 258.8 C1700.4 258.6 1698.6 261.2 1697.6 263 C1696.6 264.4 1695.2 264.8 1693.6 264.4 C1697 266.8 1701.6 266.6 1704.2 264.4 C1705.8 263 1706.4 261.6 1705.8 260.4 Z" fill="#f3f2f1" stroke="#3b3a39" stroke-width="1.1" stroke-linejoin="round"/><circle cx="1843.6" cy="230.2" r="6" fill="none" stroke="#3b3a39" stroke-width="1.3"/><path d="M1839.3 234.6 L1832 241.6" stroke="#3b3a39" stroke-width="1.3"/><path d="M1604.5 581.6 C1601 581.6 1600 577.4 1603.4 575.6 C1603 570.4 1608 567 1612.4 566 C1616.6 565.4 1620 568.4 1620.4 572.4 C1624.4 573.6 1624.6 580.6 1620 581.6 Z" fill="#f9f9f9"/><text x="1612.7" y="579.3" text-anchor="middle" font-family="Liberation Sans, sans-serif" font-weight="bold" font-size="11" fill="#3f86c6" textLength="9.8" lengthAdjust="spacingAndGlyphs">W</text><path d="M1829.2 269.3 L1836.6000000000001 276.3 L1829.2 283.3" fill="none" stroke="#3b3a39" stroke-width="1.2"/><rect x="1843.2" y="266.3" width="16.2" height="14.4" fill="#fafafa"/><rect x="1843.2" y="266.3" width="16.2" height="2.6" fill="#3b3a39"/><path d="M1843.9 266.3 V280.7 M1848.8 268.3 V280.7 M1858.7 266.3 V272.8 M1843.2 272.1 H1859.4 M1843.2 276.1 H1852.2 M1843.2 280.0 H1852.2" stroke="#3b3a39" stroke-width="1.4" fill="none"/><rect x="1852.6" y="273.1" width="9.9" height="12.3" fill="#fafafa" stroke="#3b3a39" stroke-width="1.3"/><rect x="1855" y="275.4" width="5.2" height="2.6" fill="#c8c6c4" stroke="#3b3a39" stroke-width="1"/><path d="M1854.6 280.6 H1860.6 M1854.6 283 H1860.6" stroke="#8a8886" stroke-width="1.2" stroke-dasharray="1.4 0.9"/><path d="M1829.2 299.5 L1836.6000000000001 306.5 L1829.2 313.5" fill="none" stroke="#3b3a39" stroke-width="1.2"/><rect x="1844.1" y="299.2" width="16.8" height="15.5" fill="#3b3a39"/><rect x="1845.6" y="301.5" width="13.8" height="0.8" fill="#b8b6b4"/><rect x="1845.7" y="303.6" width="3.0" height="2.1" fill="#f6f5f4"/><rect x="1845.7" y="307.8" width="3.0" height="2.1" fill="#f6f5f4"/><rect x="1845.7" y="311.5" width="3.0" height="1.7" fill="#f6f5f4"/><rect x="1850.9" y="303.6" width="2.9" height="2.1" fill="#f6f5f4"/><rect x="1850.9" y="307.8" width="2.9" height="2.1" fill="#f6f5f4"/><rect x="1850.9" y="311.5" width="2.9" height="1.7" fill="#f6f5f4"/><rect x="1856.0" y="303.6" width="3.1" height="2.1" fill="#f6f5f4"/><rect x="1856.0" y="307.8" width="3.1" height="2.1" fill="#f6f5f4"/><rect x="1856.0" y="311.5" width="3.1" height="1.7" fill="#f6f5f4"/><path d="M1826 333.09999999999997 L1833 340.49999999999994 L1840 333.09999999999997" fill="none" stroke="#3b3a39" stroke-width="1.2"/><rect x="1844.1" y="329.4" width="16.8" height="15.5" fill="#3b3a39"/><rect x="1845.6" y="331.7" width="13.8" height="0.8" fill="#b8b6b4"/><rect x="1845.7" y="333.8" width="3.0" height="2.1" fill="#f6f5f4"/><rect x="1845.7" y="338.0" width="3.0" height="2.1" fill="#f6f5f4"/><rect x="1845.7" y="341.7" width="3.0" height="1.7" fill="#f6f5f4"/><rect x="1850.9" y="333.8" width="2.9" height="2.1" fill="#f6f5f4"/><rect x="1850.9" y="338.0" width="2.9" height="2.1" fill="#f6f5f4"/><rect x="1850.9" y="341.7" width="2.9" height="1.7" fill="#f6f5f4"/><rect x="1856.0" y="333.8" width="3.1" height="2.1" fill="#f6f5f4"/><rect x="1856.0" y="338.0" width="3.1" height="2.1" fill="#f6f5f4"/><rect x="1856.0" y="341.7" width="3.1" height="1.7" fill="#f6f5f4"/><path d="M1829.2 450.5 L1836.6000000000001 457.5 L1829.2 464.5" fill="none" stroke="#3b3a39" stroke-width="1.2"/><rect x="1844.1" y="450.2" width="16.8" height="15.5" fill="#3b3a39"/><rect x="1845.6" y="452.5" width="13.8" height="0.8" fill="#b8b6b4"/><rect x="1845.7" y="454.6" width="3.0" height="2.1" fill="#f6f5f4"/><rect x="1845.7" y="458.8" width="3.0" height="2.1" fill="#f6f5f4"/><rect x="1845.7" y="462.5" width="3.0" height="1.7" fill="#f6f5f4"/><rect x="1850.9" y="454.6" width="2.9" height="2.1" fill="#f6f5f4"/><rect x="1850.9" y="458.8" width="2.9" height="2.1" fill="#f6f5f4"/><rect x="1850.9" y="462.5" width="2.9" height="1.7" fill="#f6f5f4"/><rect x="1856.0" y="454.6" width="3.1" height="2.1" fill="#f6f5f4"/><rect x="1856.0" y="458.8" width="3.1" height="2.1" fill="#f6f5f4"/><rect x="1856.0" y="462.5" width="3.1" height="1.7" fill="#f6f5f4"/><path d="M1829.2 480.70000000000005 L1836.6000000000001 487.70000000000005 L1829.2 494.70000000000005" fill="none" stroke="#3b3a39" stroke-width="1.2"/><rect x="1844.1" y="480.40000000000003" width="16.8" height="15.5" fill="#3b3a39"/><rect x="1845.6" y="482.70000000000005" width="13.8" height="0.8" fill="#b8b6b4"/><rect x="1845.7" y="484.8" width="3.0" height="2.1" fill="#f6f5f4"/><rect x="1845.7" y="489.0" width="3.0" height="2.1" fill="#f6f5f4"/><rect x="1845.7" y="492.7" width="3.0" height="1.7" fill="#f6f5f4"/><rect x="1850.9" y="484.8" width="2.9" height="2.1" fill="#f6f5f4"/><rect x="1850.9" y="489.0" width="2.9" height="2.1" fill="#f6f5f4"/><rect x="1850.9" y="492.7" width="2.9" height="1.7" fill="#f6f5f4"/><rect x="1856.0" y="484.8" width="3.1" height="2.1" fill="#f6f5f4"/><rect x="1856.0" y="489.0" width="3.1" height="2.1" fill="#f6f5f4"/><rect x="1856.0" y="492.7" width="3.1" height="1.7" fill="#f6f5f4"/><path d="M1829.2 510.9 L1836.6000000000001 517.9 L1829.2 524.9" fill="none" stroke="#3b3a39" stroke-width="1.2"/><rect x="1844.1" y="510.59999999999997" width="16.8" height="15.5" fill="#3b3a39"/><rect x="1845.6" y="512.9" width="13.8" height="0.8" fill="#b8b6b4"/><rect x="1845.7" y="515.0" width="3.0" height="2.1" fill="#f6f5f4"/><rect x="1845.7" y="519.2" width="3.0" height="2.1" fill="#f6f5f4"/><rect x="1845.7" y="522.9" width="3.0" height="1.7" fill="#f6f5f4"/><rect x="1850.9" y="515.0" width="2.9" height="2.1" fill="#f6f5f4"/><rect x="1850.9" y="519.2" width="2.9" height="2.1" fill="#f6f5f4"/><rect x="1850.9" y="522.9" width="2.9" height="1.7" fill="#f6f5f4"/><rect x="1856.0" y="515.0" width="3.1" height="2.1" fill="#f6f5f4"/><rect x="1856.0" y="519.2" width="3.1" height="2.1" fill="#f6f5f4"/><rect x="1856.0" y="522.9" width="3.1" height="1.7" fill="#f6f5f4"/><g transform="translate(1602.0,304.5)"><rect x="1.3" y="3.2" width="5.0" height="5.3" fill="#fcfcfc" stroke="#4b4947" stroke-width="1.2" /><rect x="6.3" y="3.2" width="8.3" height="5.3" fill="#8bc3ee" stroke="#1273c4" stroke-width="1.4" /><rect x="1.3" y="13.4" width="8.2" height="5.1" fill="#fcfcfc" stroke="#4b4947" stroke-width="1.2" /><rect x="9.5" y="13.4" width="10.1" height="5.1" fill="#c8c6c4" stroke="#8a8886" stroke-width="1.2" /><path d="M0.7 0.4 V22.3 H22.9" fill="none" stroke="#4b4947" stroke-width="1.3"/></g><g transform="translate(1637.3,304.5)"><rect x="4.4" y="15.2" width="5.5" height="6.8" fill="#fcfcfc" stroke="#4b4947" stroke-width="1.2" /><rect x="4.4" y="7.2" width="5.5" height="8.0" fill="#8bc3ee" stroke="#1273c4" stroke-width="1.4" /><rect x="14.6" y="13.1" width="5.4" height="8.9" fill="#fcfcfc" stroke="#4b4947" stroke-width="1.2" /><rect x="14.6" y="3.5" width="5.4" height="9.6" fill="#c8c6c4" stroke="#8a8886" stroke-width="1.2" /><path d="M0.8 0.4 V22.3 H22.9" fill="none" stroke="#4b4947" stroke-width="1.3"/></g><g transform="translate(1672.6,304.5)"><rect x="1" y="1.3" width="20.9" height="4.3" fill="#8bc3ee" stroke="#1273c4" stroke-width="1.4" /><rect x="1" y="6.6" width="12.2" height="3.7" fill="#fcfcfc" stroke="#4b4947" stroke-width="1.2" /><rect x="1" y="11.6" width="8.9" height="3.8" fill="#c8c6c4" stroke="#8a8886" stroke-width="1.2" /><rect x="1" y="16.3" width="15.3" height="3.9" fill="#fcfcfc" stroke="#4b4947" stroke-width="1.2" /><rect x="1" y="20.6" width="15.3" height="1.7" fill="#c8c6c4" stroke="#8a8886" stroke-width="0.8" /><path d="M0.5 -0.2 V22.5 H23.3" fill="none" stroke="#4b4947" stroke-width="1.3"/></g><g transform="translate(1707.9,304.5)"><rect x="2.5" y="1.3" width="4.4" height="20.9" fill="#8bc3ee" stroke="#1273c4" stroke-width="1.4" /><rect x="7.3" y="9.8" width="3.9" height="12.4" fill="#fcfcfc" stroke="#4b4947" stroke-width="1.2" /><rect x="11.8" y="13" width="4.8" height="9.2" fill="#c8c6c4" stroke="#8a8886" stroke-width="1.2" /><rect x="17.2" y="6.7" width="4.4" height="15.5" fill="#fcfcfc" stroke="#4b4947" stroke-width="1.2" /><path d="M0.5 -0.3 V22.5 H22.8" fill="none" stroke="#4b4947" stroke-width="1.3"/></g><g transform="translate(1743.2,304.5)"><rect x="1.6" y="3.1" width="4.0" height="5.5" fill="#fcfcfc" stroke="#4b4947" stroke-width="1.2" /><rect x="5.6" y="3.1" width="14.4" height="5.5" fill="#8bc3ee" stroke="#1273c4" stroke-width="1.5" rx="0.8"/><rect x="1.6" y="13.4" width="11.4" height="5.2" fill="#fcfcfc" stroke="#4b4947" stroke-width="1.2" /><rect x="13" y="13.4" width="7" height="5.2" fill="#c8c6c4" stroke="#8a8886" stroke-width="1.2" /><path d="M0.9 0.4 V22.3 H22.7" fill="none" stroke="#4b4947" stroke-width="1.3"/></g><g transform="translate(1778.5,304.5)"><rect x="4.5" y="17.5" width="5.5" height="4.5" fill="#fcfcfc" stroke="#4b4947" stroke-width="1.2" /><rect x="4.5" y="3.1" width="5.5" height="14.4" fill="#8bc3ee" stroke="#1273c4" stroke-width="1.5" /><rect x="14.8" y="10.2" width="5.2" height="11.8" fill="#fcfcfc" stroke="#4b4947" stroke-width="1.2" /><rect x="14.8" y="3.2" width="5.2" height="7.0" fill="#c8c6c4" stroke="#8a8886" stroke-width="1.2" /><path d="M0.9 0.4 V22.3 H23.1" fill="none" stroke="#4b4947" stroke-width="1.3"/></g><g transform="translate(1602.0,339.8)"><path d="M0.9 17.9 L14.5 4.2 L22.4 11.8" fill="none" stroke="#1273c4" stroke-width="1.4" /><path d="M0.7 12.1 L8.4 5.6 L14.5 12.4 L22.1 4.5" fill="none" stroke="#4b4947" stroke-width="1.4" /><path d="M0.7 0.4 V22.3 H22.9" fill="none" stroke="#4b4947" stroke-width="1.3"/></g><g transform="translate(1637.3,339.8)"><path d="M13.5 9.2 L17.3 0.9 L22.3 10.3 V22 Z" fill="#c8c6c4" stroke="#8a8886" stroke-width="1.1" /><path d="M0.4 13.8 L7.8 2.2 L13.5 9.2 L6 19.7 Z" fill="#fcfcfc" stroke="none" stroke-width="0" /><path d="M0.4 14.1 L6 19.7 L13.5 9.2 L22.3 22 H0.4 Z" fill="#8bc3ee" stroke="#1273c4" stroke-width="1.4" /><path d="M0.4 13.8 L7.8 2.2 L13.5 9.2" fill="none" stroke="#4b4947" stroke-width="1.3" /></g><g transform="translate(1672.6,339.8)"><path d="M1.4 13.8 L7.8 19.4 L16 10.9 L23 17.7 V22.3 H1.4 Z" fill="#fcfcfc" stroke="none" stroke-width="0" /><path d="M1.4 5.6 L7.8 11.2 L16 3.6 L19.5 6.8 L23 6.8 V17.7 L16 10.9 L7.8 19.4 L1.4 13.8 Z" fill="#8bc3ee" stroke="none" stroke-width="0" /><path d="M1.4 5.6 L7.8 11.2 L16 3.6 L19.5 6.8 L23 6.8 M1.4 13.8 L7.8 19.4 L16 10.9 L23 17.7" fill="none" stroke="#1273c4" stroke-width="1.5" /><path d="M0.8 0.4 V22.3 H22.9" fill="none" stroke="#4b4947" stroke-width="1.3"/></g><g transform="translate(1707.9,339.8)"><rect x="4.7" y="17.7" width="5.0" height="4.3" fill="#fcfcfc" stroke="#4b4947" stroke-width="1.2" /><rect x="4.7" y="3.2" width="5.0" height="14.5" fill="#8bc3ee" stroke="#1273c4" stroke-width="1.5" /><rect x="14.8" y="9.5" width="5.0" height="12.5" fill="#fcfcfc" stroke="#4b4947" stroke-width="1.2" /><rect x="14.8" y="3.5" width="5.0" height="6.0" fill="#c8c6c4" stroke="#8a8886" stroke-width="1.2" /><path d="M0.8 20.6 L8.2 11.8 L14.6 16.8 L22.5 9.5" fill="none" stroke="#4b4947" stroke-width="1.4" /><path d="M0.7 0.4 V22.3 H22.9" fill="none" stroke="#4b4947" stroke-width="1.3"/></g><g transform="translate(1743.2,339.8)"><rect x="9.6" y="2" width="5.3" height="20" fill="#fcfcfc" stroke="#4b4947" stroke-width="1.2" /><rect x="4.1" y="10.5" width="5.5" height="11.5" fill="#8bc3ee" stroke="#1273c4" stroke-width="1.4" /><rect x="15" y="7" width="5.2" height="15" fill="#c8c6c4" stroke="#8a8886" stroke-width="1.2" /><path d="M1 20.6 L8.6 11.5 L14.5 16.8 L22.5 9.5" fill="none" stroke="#4b4947" stroke-width="1.4" /><path d="M0.9 0.3 V22.3 H22.7" fill="none" stroke="#4b4947" stroke-width="1.3"/></g><g transform="translate(1778.5,339.8)"><rect x="2.8" y="14.3" width="4.4" height="4.3" fill="#f5c27d" stroke="#e07a08" stroke-width="1.2" /><rect x="8.9" y="11" width="4.9" height="4.2" fill="#f5c27d" stroke="#e07a08" stroke-width="1.2" /><rect x="16.8" y="14.3" width="4.6" height="4.3" fill="#f5c27d" stroke="#e07a08" stroke-width="1.2" /><path d="M2.6 6.4 C6 7 8.5 10 10.9 10 C14.5 10 17 5.2 21.3 4.6" fill="none" stroke="#8a8886" stroke-width="4.2" /><path d="M2.6 6.4 C6 7 8.5 10 10.9 10 C14.5 10 17 5.2 21.3 4.6" fill="none" stroke="#c8c6c4" stroke-width="2" /><path d="M2.6 11.2 C6 12 8 17.9 11.4 17.9 C15.4 17.9 16 10 21.3 8.9" fill="none" stroke="#1273c4" stroke-width="4.4" /><path d="M2.6 11.2 C6 12 8 17.9 11.4 17.9 C15.4 17.9 16 10 21.3 8.9" fill="none" stroke="#8bc3ee" stroke-width="1.8" /><path d="M0.9 0.3 V22.3 H23.1" fill="none" stroke="#4b4947" stroke-width="1.3"/></g><g transform="translate(1602.0,375.1)"><rect x="1.3" y="7.3" width="1.6" height="15.0" fill="#c8c6c4" stroke="none" stroke-width="0" /><rect x="3.1" y="7.5" width="4.4" height="14.8" fill="#fcfcfc" stroke="#4b4947" stroke-width="1.2" /><path d="M7.5 7.5 H10.4 V13.4 H13" fill="none" stroke="#8a8886" stroke-width="1.6" /><rect x="13" y="1.8" width="1.9" height="11.8" fill="#1273c4" stroke="none" stroke-width="0" /><rect x="15.2" y="2.3" width="2.2" height="20.0" fill="#fcfcfc" stroke="#8a8886" stroke-width="1.2" /><rect x="18.4" y="2.3" width="2.4" height="20.0" fill="#fcfcfc" stroke="#8a8886" stroke-width="1.2" /><path d="M13 2.2 H20.8" fill="none" stroke="#8a8886" stroke-width="1.3" /><path d="M0.6 0 V22.4 H22.7" fill="none" stroke="#4b4947" stroke-width="1.3"/></g><g transform="translate(1637.3,375.1)"><rect x="0.6" y="2.3" width="21.6" height="5.9" fill="#8bc3ee" stroke="#1273c4" stroke-width="1.5" /><rect x="3.3" y="8.9" width="16.4" height="5.7" fill="#8bc3ee" stroke="#1273c4" stroke-width="1.5" /><rect x="7.1" y="15.3" width="9.1" height="6.0" fill="#8bc3ee" stroke="#1273c4" stroke-width="1.5" /></g><g transform="translate(1672.6,375.1)"><rect x="16.5" y="1.8" width="3.8" height="3.2" fill="#252423" stroke="none" stroke-width="0" /><rect x="3.9" y="15.5" width="3.7" height="3.5" fill="#252423" stroke="none" stroke-width="0" /><rect x="4.1" y="5.3" width="3.7" height="3.5" fill="#8bc3ee" stroke="none" stroke-width="0" /><rect x="10.4" y="9.1" width="3.8" height="3.7" fill="#8bc3ee" stroke="none" stroke-width="0" /><rect x="16.5" y="14.1" width="3.8" height="3.5" fill="#8bc3ee" stroke="none" stroke-width="0" /><path d="M0.8 0 V22.4 H23" fill="none" stroke="#4b4947" stroke-width="1.3"/></g><g transform="translate(1707.9,375.1)"><circle cx="11.6" cy="11.5" r="10.6" fill="#fcfcfc" stroke="#4b4947" stroke-width="1.3"/><path d="M10.6 12.3 V0.95 A10.6 10.6 0 0 1 18.13 19.85 Z" fill="#8bc3ee" stroke="#1273c4" stroke-width="1.4" /></g><g transform="translate(1743.2,375.1)"><path d="M1.00 11.50 A10.5 10.5 0 0 1 11.50 1.00 L11.50 6.50 A5 5 0 0 0 6.50 11.50 Z" fill="#fcfcfc" stroke="#8a8886" stroke-width="1.3" /><path d="M11.87 1.01 A10.5 10.5 0 1 1 1.01 11.13 L6.50 11.33 A5 5 0 1 0 11.67 6.50 Z" fill="#8bc3ee" stroke="#1273c4" stroke-width="1.5" /></g><g transform="translate(1778.5,375.1)"><rect x="11.2" y="0.7" width="11.1" height="21.6" fill="#fcfcfc" stroke="#4b4947" stroke-width="1.4" /><path d="M11.2 1.2 H22.3" fill="none" stroke="#8a8886" stroke-width="1.8" /><path d="M11.2 7.2 H22.3 M16.1 7.2 V22.3 M16.1 14.7 H22.3" fill="none" stroke="#4b4947" stroke-width="1.4" /><rect x="0.7" y="0.7" width="10.5" height="11.4" fill="#8bc3ee" stroke="#1273c4" stroke-width="1.5" /><rect x="0.7" y="12.1" width="10.5" height="10.2" fill="#8bc3ee" stroke="#1273c4" stroke-width="1.5" /></g><g transform="translate(1602.0,410.4)"><circle cx="13.3" cy="10.2" r="6.6" fill="#fcfcfc" stroke="#4b4947" stroke-width="1.3"/><path d="M14 5.5 C16 4.8 18.2 6.4 18.6 8.4 C17.6 8.2 16.8 9.6 15.2 9.4 C13.6 9 13.4 6.6 14 5.5 Z M10.6 12.6 C12 11.6 14.6 12 15.2 13.4 C15.4 14.8 14.8 16 13.6 16.4 C11.8 16 10.6 14.4 10.6 12.6 Z M7.4 8 C8 8.6 8 10.6 7.6 11.6 C7 10.6 7 9 7.4 8 Z" fill="#2f9a4c"/><path d="M10.82 0.93 A9.6 9.6 0 1 0 19.72 17.33" fill="none" stroke="#4b4947" stroke-width="1.3" /><path d="M12.2 19.8 V22.2 M4 22.2 H20.2" fill="none" stroke="#4b4947" stroke-width="1.3" /></g><g transform="translate(1637.3,410.4)"><path d="M10 4.9 H14.4 L16.8 2.3 H22.4 V10.9 H10.4 C9.4 9 8.8 7 9.6 4.9 Z" fill="#c8c6c4" stroke="#4b4947" stroke-width="1.3" /><path d="M0.5 11.4 H11.6 L12.6 12.5 C11.6 14 10.6 15.6 10.8 17.4 L10.8 21 L9.7 21.4 L6.8 19.3 L4.4 18.9 L2.2 16 L0.5 12.8 Z" fill="#c8c6c4" stroke="#4b4947" stroke-width="1.3" /><path d="M0.6 2.3 H7.3 L9.6 4.9 C8.8 7 9.4 9 10.4 10.8 H1 L2.8 6.6 Z" fill="#8bc3ee" stroke="#1273c4" stroke-width="1.5" /><path d="M12.6 11.4 H22.4 V14.3 C22 16 21 17.2 19.4 18 L17.4 18.9 L16.6 19.8 L15.6 19.2 L14.6 19.6 L13.8 19.4 L12.6 19.8 L11.2 20.8 L10.8 17.4 C10.6 15.6 11.6 14 12.6 12.5 Z" fill="#8bc3ee" stroke="#1273c4" stroke-width="1.5" /></g><g transform="translate(1672.6,410.4)"><path d="M10 4.9 H14.4 L16.8 2.3 H22.4 V10.9 H10.4 C9.4 9 8.8 7 9.6 4.9 Z" fill="#fcfcfc" stroke="#4b4947" stroke-width="1.3" /><path d="M0.5 11.4 H11.6 L12.6 12.5 C11.6 14 10.6 15.6 10.8 17.4 L10.8 21 L9.7 21.4 L6.8 19.3 L4.4 18.9 L2.2 16 L0.5 12.8 Z" fill="#fcfcfc" stroke="#4b4947" stroke-width="1.3" /><path d="M0.6 2.3 H7.3 L9.6 4.9 C8.8 7 9.4 9 10.4 10.8 H1 L2.8 6.6 Z" fill="#fcfcfc" stroke="#1b87d6" stroke-width="1.3" /><path d="M12.6 11.4 H22.4 V14.3 C22 16 21 17.2 19.4 18 L17.4 18.9 L16.6 19.8 L15.6 19.2 L14.6 19.6 L13.8 19.4 L12.6 19.8 L11.2 20.8 L10.8 17.4 C10.6 15.6 11.6 14 12.6 12.5 Z" fill="#fcfcfc" stroke="#1b87d6" stroke-width="1.3" /></g><g transform="translate(1707.9,410.4)"><path d="M15.8 -1 L1.7 21 L12.8 16.3 Z" fill="#3f93cf"/><path d="M15.8 -1 L12.8 16.3 L21.3 23.9 Z" fill="#4d9edb"/><path d="M12.8 16.3 L21.3 23.9 L16.4 13 Z" fill="#1f7acc" opacity="0.85"/></g><g transform="translate(1743.2,410.4)"><path d="M0.90 16.30 A10.6 10.6 0 0 1 7.19 6.62 L9.38 11.55 A5.2 5.2 0 0 0 6.30 16.30 Z" fill="#fcfcfc" stroke="#4b4947" stroke-width="1.3" /><path d="M6.85 6.77 A10.6 10.6 0 0 1 22.10 16.30 L16.70 16.30 A5.2 5.2 0 0 0 9.22 11.63 Z" fill="#8bc3ee" stroke="#1273c4" stroke-width="1.5" /><path d="M11.3 15.8 L17.2 9.8 L12.8 16.8 Z" fill="#3b3a39" stroke="#3b3a39" stroke-width="0.8" /><circle cx="11.8" cy="15.8" r="1.3" fill="#3b3a39"/></g><g transform="translate(1778.5,410.4)"><rect x="0.8" y="3.3" width="21.5" height="16.6" fill="#fcfcfc" stroke="#4b4947" stroke-width="1.5" /><path d="M2.7 16.9 H20.4" fill="none" stroke="#4b4947" stroke-width="1.2" /><path d="M2.7 17.9 H20.4" fill="none" stroke="#c8c6c4" stroke-width="1.2" /><text x="3.2" y="14.9" font-family="Liberation Sans, sans-serif" font-size="11.6" fill="#3f95d8" textLength="17" lengthAdjust="spacingAndGlyphs">123</text></g><g transform="translate(1602.0,445.7)"><rect x="0.8" y="0.9" width="21.5" height="21.6" fill="#fcfcfc" stroke="#4b4947" stroke-width="1.5" /><path d="M4.4 4.3 V18.9" fill="none" stroke="#4b4947" stroke-width="1.1" /><rect x="6.3" y="5.4" width="12.8" height="2.5" fill="#0b5cad" stroke="none" stroke-width="0" /><rect x="6.3" y="13" width="12.8" height="2.4" fill="#0b5cad" stroke="none" stroke-width="0" /><path d="M6.3 9.8 H12.7 M6.3 17.4 H12.7" fill="none" stroke="#a19f9d" stroke-width="1.3" /></g><g transform="translate(1637.3,445.7)"><rect x="0.9" y="2.2" width="21.1" height="17.4" fill="#fcfcfc" stroke="#4b4947" stroke-width="1.5" /><path d="M2.9 12.9 L7 5.7 L11.1 12.9 Z" fill="#2f9a4c"/><path d="M5.6 11.4 L7 8.9 L8.4 11.4 Z" fill="#8fce9f"/><path d="M11.7 5.5 H19.9 L15.8 12.5 Z" fill="#e02b20"/><path d="M14.4 6.6 H17.2 L15.8 9.1 Z" fill="#f0a030"/><path d="M2.9 16 H20.2" fill="none" stroke="#8a8886" stroke-width="1.6" /></g><g transform="translate(1672.6,445.7)"><rect x="0.9" y="0.9" width="21.3" height="21.6" fill="#fcfcfc" stroke="#4b4947" stroke-width="1.5" /><rect x="0.9" y="0.9" width="21.3" height="3.7" fill="#c8c6c4" stroke="#4b4947" stroke-width="1.5" /><rect x="4.4" y="8.6" width="4.0" height="3.8" fill="#e1dfdd" stroke="#8a8886" stroke-width="1.3" /><rect x="4.4" y="14.8" width="4.0" height="3.8" fill="#e1dfdd" stroke="#8a8886" stroke-width="1.3" /><rect x="13.4" y="10" width="11" height="14" fill="#f3f2f1"/><path d="M11.9 12.2 H24.2 V13.6 L20.1 17.7 V23.6 H16 V17.7 L11.9 13.6 Z" fill="#fcfcfc" stroke="#4b4947" stroke-width="1.5" /></g><g transform="translate(1707.9,445.7)"><rect x="0.8" y="0.9" width="21.6" height="21.6" fill="#fcfcfc" stroke="#4b4947" stroke-width="1.5" /><path d="M8.5 4.8 V22.5 M14.9 4.8 V22.5 M0.8 10.7 H22.4 M0.8 16.3 H22.4" fill="none" stroke="#8a8886" stroke-width="1.5" /><rect x="0.8" y="0.9" width="21.6" height="3.8" fill="#c8c6c4" stroke="#4b4947" stroke-width="1.5" /><rect x="0.8" y="0.9" width="21.6" height="21.6" fill="none" stroke="#4b4947" stroke-width="1.5" /></g><g transform="translate(1743.2,445.7)"><rect x="0.9" y="0.9" width="21.3" height="21.6" fill="#fcfcfc" stroke="#4b4947" stroke-width="1.5" /><rect x="14.2" y="4.7" width="8.0" height="17.8" fill="#8bc3ee" stroke="none" stroke-width="0" /><rect x="0.9" y="16" width="21.3" height="6.5" fill="#8bc3ee" stroke="none" stroke-width="0" /><path d="M8.3 4.8 V16 M0.9 10.7 H14.2" fill="none" stroke="#8a8886" stroke-width="1.4" /><path d="M14.2 4.8 V22.5 M0.9 16 H22.2 M8.3 16 V22.5 M14.2 10.7 H22.2" fill="none" stroke="#1273c4" stroke-width="1.5" /><rect x="0.9" y="0.9" width="21.3" height="3.8" fill="#c8c6c4" stroke="#4b4947" stroke-width="1.5" /><rect x="0.9" y="0.9" width="21.3" height="21.6" fill="none" stroke="#4b4947" stroke-width="1.5" /></g><g transform="translate(1778.5,445.7)"><text x="5.1" y="18.8" font-family="Liberation Sans, sans-serif" font-weight="bold" font-size="21.6" fill="#1b87d6" textLength="11.4" lengthAdjust="spacingAndGlyphs">R</text></g><g transform="translate(1602.0,481.0)"><text x="-0.6" y="16.7" font-family="Liberation Sans, sans-serif" font-weight="bold" font-size="22.4" fill="#1b87d6" textLength="23.2" lengthAdjust="spacingAndGlyphs">Py</text></g><g transform="translate(1637.3,481.0)"><path d="M0.8 4.5 H15.4" fill="none" stroke="#1273c4" stroke-width="1.4" /><circle cx="18.5" cy="4.7" r="3" fill="#8bc3ee" stroke="#1273c4" stroke-width="1.5"/><path d="M0.8 11 H11.8 M0.8 16.1 H6.7" fill="none" stroke="#8a8886" stroke-width="1.5" /><circle cx="13.5" cy="11" r="1.6" fill="#c8c6c4" stroke="#8a8886" stroke-width="1.2"/><circle cx="8.4" cy="16.1" r="1.6" fill="#c8c6c4" stroke="#8a8886" stroke-width="1.2"/><path d="M0.8 0.3 V22.4 H22.6" fill="none" stroke="#4b4947" stroke-width="1.3"/></g><g transform="translate(1672.6,481.0)"><path d="M8.9 11.1 H14.2" fill="none" stroke="#8a8886" stroke-width="1.6" /><path d="M14.2 3.5 H11.9 V18.8 H14.2" fill="none" stroke="#4b4947" stroke-width="1.3" /><rect x="0.8" y="8.6" width="7.9" height="5.1" fill="#8bc3ee" stroke="#1273c4" stroke-width="1.6" /><rect x="14.6" y="1" width="7.9" height="5.1" fill="#8bc3ee" stroke="#1273c4" stroke-width="1.6" /><rect x="14.6" y="8.6" width="7.9" height="5.1" fill="#8bc3ee" stroke="#1273c4" stroke-width="1.6" /><rect x="14.6" y="16.2" width="7.9" height="5.1" fill="#8bc3ee" stroke="#1273c4" stroke-width="1.6" /></g><g transform="translate(1707.9,481.0)"><path d="M0.9 2.4 H22.5 V15.9 H9.9 L4.6 21.8 V15.9 H0.9 Z" fill="#fcfcfc" stroke="#1273c4" stroke-width="1.5" /></g><g transform="translate(1743.2,481.0)"><path d="M3.2 5.3 V0.9 H13.6 L19.9 7 V22.4 H3.2 V13.4" fill="#fcfcfc" stroke="#4b4947" stroke-width="1.5" /><path d="M13.6 0.9 V7 H19.9" fill="none" stroke="#4b4947" stroke-width="1.5" /><circle cx="3.9" cy="9.2" r="2" fill="#8bc3ee" stroke="#1273c4" stroke-width="1.7"/><path d="M9.2 10.8 H16.5 M6.8 14.9 H13.9" fill="none" stroke="#4a9ad6" stroke-width="1.6" /></g><g transform="translate(1778.5,481.0)"><path d="M5.7 2.8 H0.9 C0.5 7.6 2.2 10.6 6.4 11.6 M17.4 2.8 H22.2 C22.6 7.6 20.8 10.6 16.6 11.6" fill="none" stroke="#4b4947" stroke-width="1.3" /><path d="M5.7 3.4 V10.2 C5.7 14 8.4 16 11.5 16 C14.6 16 17.4 14 17.4 10.2 V3.4 Z" fill="#fcfcfc" stroke="#4b4947" stroke-width="1.4" /><path d="M9.8 16 L14.6 19.9 M13.2 16 L8.4 19.9" fill="none" stroke="#4b4947" stroke-width="1.2" /><rect x="5.7" y="0.9" width="11.7" height="2.5" fill="#8bc3ee" stroke="#1273c4" stroke-width="1.4" /><rect x="5.7" y="19.9" width="11.7" height="2.5" fill="#8bc3ee" stroke="#1273c4" stroke-width="1.4" /></g><g transform="translate(1602.0,516.3)"><path d="M2.3 -0.4 H12.9 L20.3 6.8 V23.6 H2.3 Z" fill="#fcfcfc" stroke="#3b3a39" stroke-width="1.9" /><path d="M12.9 -0.4 V6.8 H20.3" fill="none" stroke="#3b3a39" stroke-width="1.5" /><rect x="5.3" y="13.8" width="2.4" height="6.6" fill="#3b3a39" stroke="none" stroke-width="0" /><rect x="9.9" y="16.9" width="2.6" height="3.5" fill="#3b3a39" stroke="none" stroke-width="0" /><rect x="14.4" y="10.7" width="2.7" height="9.7" fill="#3b3a39" stroke="none" stroke-width="0" /></g><g transform="translate(1637.3,516.3)"><path d="M19.4 2.2 C17 3 14.6 5.4 13.4 7 C12.6 9 11.4 9.8 10.6 11.4 C10.8 13.4 11.4 14.4 12.4 15 C13 16.6 12 18.6 10 21 L14 22.4 L15.4 17.6 L14.6 13 L17 11.4 L17.4 9 L20 8 L21.8 7.4 V2.2 Z" fill="#8bc3ee" stroke="none" stroke-width="0" /><path d="M8.2 1 H22.2 V9.6 M14.6 22.8 H0.6 V12.6" fill="none" stroke="#1273c4" stroke-width="1.5" /><path d="M-1.2 1.6 C-1.2 0 0 -0.8 1.4 -0.8 H4.2 C5.8 -0.8 6.7 0 6.7 1.6 V8.4 L2.7 12.5 L-1.2 8.4 Z" fill="#e07a08"/><circle cx="2.7" cy="4.2" r="1.4" fill="#fff"/><circle cx="22" cy="13.8" r="1.9" fill="#e07a08"/><circle cx="19.7" cy="19.7" r="3.2" fill="#e07a08"/></g><g transform="translate(1672.6,516.3)"><path d="M11.2 22 H9.4 L0.6 11.5 L9.4 1 H11.2" fill="#fcfcfc" stroke="#a23bab" stroke-width="1.3" /><path d="M13.6 1 L22.9 11.5 L13.6 22 L9 16.7 L13.4 11.5 L9 6.3 Z" fill="#fcfcfc" stroke="#a23bab" stroke-width="1.3" /><path d="M11.3 8.9 L18.2 16.8 M18.2 6.2 L11.3 14.1" fill="none" stroke="#a23bab" stroke-width="1.3" /></g><g transform="translate(1707.9,516.3)"><path d="M0.6 2.2 H15.4 L22.4 10.8 L15.4 19.9 H0.6 L7.6 10.8 Z" fill="#fcfcfc" stroke="#1b87d6" stroke-width="1.4" /><path d="M15 2.8 L1.8 19.2 M20.4 8.4 L8.8 19.6" fill="none" stroke="#1b87d6" stroke-width="1.4" /></g><g transform="translate(1743.2,516.3)"><circle cx="3.9" cy="9.8" r="1.25" fill="#252423"/><circle cx="11.5" cy="9.8" r="1.25" fill="#252423"/><circle cx="19.1" cy="9.8" r="1.25" fill="#252423"/></g></svg>
</body></html>
